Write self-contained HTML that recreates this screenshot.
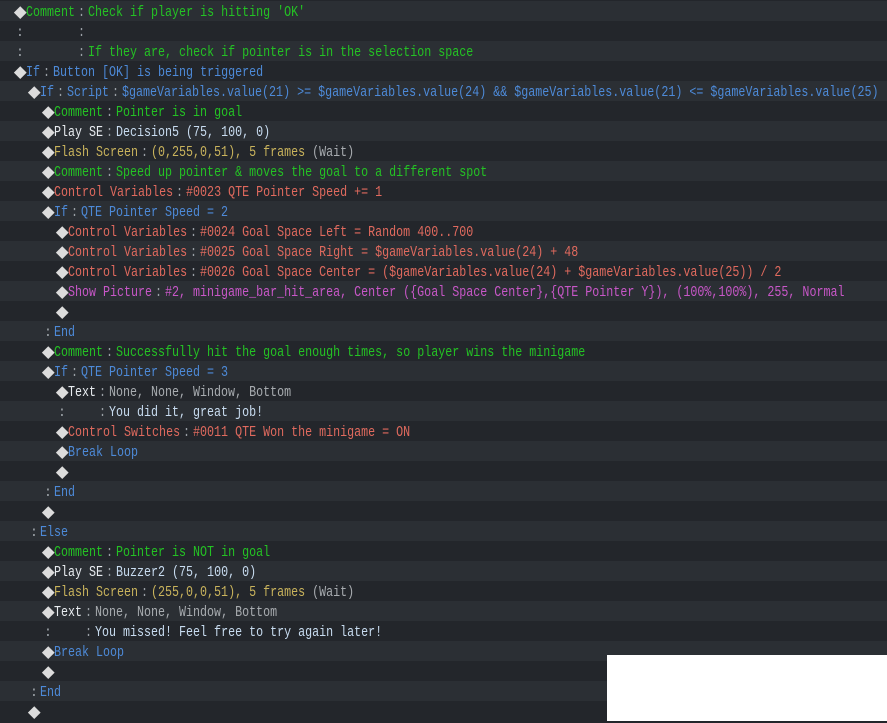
<!DOCTYPE html>
<html><head><meta charset="utf-8"><style>
body{margin:0;width:887px;height:721px;overflow:hidden;background:#23262b;position:relative;font-family:"Liberation Mono",monospace;}
.r{position:absolute;left:0;width:887px;height:20px;}
.r.e{background:#2b2f34;}
.l{position:absolute;top:2px;height:20px;line-height:20px;white-space:nowrap;display:flex;align-items:center;}
.d{width:12px;height:20px;position:relative;flex:none;}
.d.k::before{content:"";position:absolute;left:1.5px;top:4.5px;width:8.5px;height:8.5px;background:#dcdcdc;transform:rotate(45deg);}
.d.c::before{content:":";position:absolute;left:0;width:12px;text-align:center;color:#9aa0a6;font-size:14px;line-height:20px;}
.t{display:inline-block;font-size:14.5px;transform:scaleX(0.805);transform-origin:left center;}
.s{display:inline-block;width:16.1px;text-align:center;color:#9aa0a6;}
.h{visibility:hidden}
.g{color:#24c224}.b{color:#4d8ad8}.w{color:#e8ecf0}.lb{color:#c8dcf0}.y{color:#c9b35c}.gr{color:#a8acb0}.rd{color:#e06a5e}.m{color:#c857c8}
.box{position:absolute;left:607px;top:655px;width:280px;height:66px;background:#fff;}
</style></head><body>
<div id="rows"></div>
<script>
var L=[
[14,'k','<span class="g">Comment</span><span class="s">:</span><span class="g">Check if player is hitting \'OK\'</span>'],
[14,'c','<span class="h">Comment</span><span class="s">:</span>'],
[14,'c','<span class="h">Comment</span><span class="s">:</span><span class="g">If they are, check if pointer is in the selection space</span>'],
[14,'k','<span class="b">If</span><span class="s">:</span><span class="b">Button [OK] is being triggered</span>'],
[28,'k','<span class="b">If</span><span class="s">:</span><span class="b">Script</span><span class="s">:</span><span class="b">$gameVariables.value(21) &gt;= $gameVariables.value(24) &amp;&amp; $gameVariables.value(21) &lt;= $gameVariables.value(25)</span>'],
[42,'k','<span class="g">Comment</span><span class="s">:</span><span class="g">Pointer is in goal</span>'],
[42,'k','<span class="w">Play SE</span><span class="s">:</span><span class="lb">Decision5 (75, 100, 0)</span>'],
[42,'k','<span class="y">Flash Screen</span><span class="s">:</span><span class="y">(0,255,0,51), 5 frames </span><span class="gr">(Wait)</span>'],
[42,'k','<span class="g">Comment</span><span class="s">:</span><span class="g">Speed up pointer &amp; moves the goal to a different spot</span>'],
[42,'k','<span class="rd">Control Variables</span><span class="s">:</span><span class="rd">#0023 QTE Pointer Speed += 1</span>'],
[42,'k','<span class="b">If</span><span class="s">:</span><span class="b">QTE Pointer Speed = 2</span>'],
[56,'k','<span class="rd">Control Variables</span><span class="s">:</span><span class="rd">#0024 Goal Space Left = Random 400..700</span>'],
[56,'k','<span class="rd">Control Variables</span><span class="s">:</span><span class="rd">#0025 Goal Space Right = $gameVariables.value(24) + 48</span>'],
[56,'k','<span class="rd">Control Variables</span><span class="s">:</span><span class="rd">#0026 Goal Space Center = ($gameVariables.value(24) + $gameVariables.value(25)) / 2</span>'],
[56,'k','<span class="m">Show Picture</span><span class="s">:</span><span class="m">#2, minigame_bar_hit_area, Center ({Goal Space Center},{QTE Pointer Y}), (100%,100%), 255, Normal</span>'],
[56,'k',''],
[42,'c','<span class="b">End</span>'],
[42,'k','<span class="g">Comment</span><span class="s">:</span><span class="g">Successfully hit the goal enough times, so player wins the minigame</span>'],
[42,'k','<span class="b">If</span><span class="s">:</span><span class="b">QTE Pointer Speed = 3</span>'],
[56,'k','<span class="w">Text</span><span class="s">:</span><span class="gr">None, None, Window, Bottom</span>'],
[56,'c','<span class="h">Text</span><span class="s">:</span><span class="lb">You did it, great job!</span>'],
[56,'k','<span class="rd">Control Switches</span><span class="s">:</span><span class="rd">#0011 QTE Won the minigame = ON</span>'],
[56,'k','<span class="b">Break Loop</span>'],
[56,'k',''],
[42,'c','<span class="b">End</span>'],
[42,'k',''],
[28,'c','<span class="b">Else</span>'],
[42,'k','<span class="g">Comment</span><span class="s">:</span><span class="g">Pointer is NOT in goal</span>'],
[42,'k','<span class="w">Play SE</span><span class="s">:</span><span class="lb">Buzzer2 (75, 100, 0)</span>'],
[42,'k','<span class="y">Flash Screen</span><span class="s">:</span><span class="y">(255,0,0,51), 5 frames </span><span class="gr">(Wait)</span>'],
[42,'k','<span class="w">Text</span><span class="s">:</span><span class="gr">None, None, Window, Bottom</span>'],
[42,'c','<span class="h">Text</span><span class="s">:</span><span class="lb">You missed! Feel free to try again later!</span>'],
[42,'k','<span class="b">Break Loop</span>'],
[42,'k',''],
[28,'c','<span class="b">End</span>'],
[28,'k','']
];
var h='';
for(var i=0;i<L.length;i++){
h+='<div class="r'+(i%2==0?' e':'')+'" style="top:'+(1+20*i)+'px"><div class="l" style="left:'+L[i][0]+'px"><span class="d '+L[i][1]+'"></span><span class="t">'+L[i][2]+'</span></div></div>';
}
document.getElementById('rows').innerHTML=h;
</script>
<div class="box"></div>
</body></html>
